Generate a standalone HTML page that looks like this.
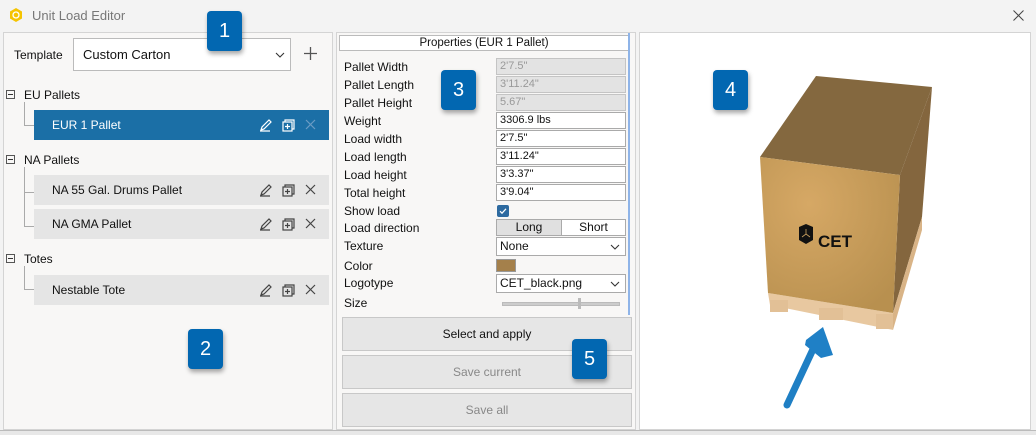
<!DOCTYPE html>
<html><head><style>
*{box-sizing:border-box;margin:0;padding:0}
body{width:1036px;height:435px;background:#f3f3f3;font-family:"Liberation Sans",sans-serif;font-size:12px;color:#111;position:relative;overflow:hidden}
.a{position:absolute}
.badge{position:absolute;width:35px;height:40px;background:#0267b1;border-radius:4px;color:#fff;font-size:20px;text-align:center;line-height:40px;box-shadow:1px 3px 5px rgba(0,0,0,.35)}
.lbl{position:absolute;left:344px;font-size:12px}
.inp{position:absolute;left:496px;width:130px;height:17px;border:1px solid #aaa;background:#fff;font-size:11px;padding-left:3px;line-height:15px}
.dis{background:#e3e3e3;color:#999;border-color:#c4c4c4}
.item{position:absolute;left:34px;width:295px;height:30px;background:#e5e5e5;line-height:30px;padding-left:18px;font-size:12px}
.grp{position:absolute;left:24px;font-size:12px}
.minus{position:absolute;left:6px;width:9px;height:9px;border:1px solid #555}
.minus:after{content:"";position:absolute;left:1px;top:3px;width:5px;height:1px;background:#333}
.ic{position:absolute;right:12px;top:7px;width:60px;height:16px}
.btn{position:absolute;left:342px;width:290px;height:34px;border:1px solid #c8c8c8;background:#e6e6e6;text-align:center;line-height:32px;font-size:12px}
.chev{position:absolute;right:5px;top:50%;margin-top:-3px}
</style></head><body>
<svg class="a" style="left:8px;top:7px" width="16" height="16"><polygon points="8,1 14,4.5 14,11.5 8,15 2,11.5 2,4.5" fill="#f5c400"/><circle cx="8" cy="8" r="3" fill="none" stroke="#fff" stroke-width="1.3"/></svg>
<div class="a" style="left:32px;top:8px;color:#777;font-size:13px">Unit Load Editor</div>
<svg class="a" style="left:1013px;top:10px" width="11" height="11"><path d="M0.5 0.5l10 10M10.5 0.5l-10 10" stroke="#444" stroke-width="1"/></svg>
<!-- left panel -->
<div class="a" style="left:3px;top:32px;width:330px;height:398px;background:#f8f7f6;border:1px solid #d4d4d4"></div>
<div class="a" style="left:14px;top:48px">Template</div>
<div class="a" style="left:73px;top:38px;width:218px;height:33px;border:1px solid #bbb;background:#fff;padding-left:9px;line-height:31px;font-size:13px">Custom Carton<svg class="chev" width="10" height="6"><path d="M1 1l4 4 4-4" fill="none" stroke="#333" stroke-width="1.1"/></svg></div>
<svg class="a" style="left:304px;top:47px" width="13" height="13"><path d="M6.5 0v13M0 6.5h13" stroke="#555" stroke-width="1.3"/></svg>
<div class="minus" style="top:90px"></div><div class="grp" style="top:88px">EU Pallets</div>
<div class="a" style="left:24px;top:102px;width:10px;height:24px;border-left:1px solid #aaa;border-bottom:1px solid #aaa"></div>
<div class="item" style="top:110px;background:#1b6fa6;color:#fff">EUR 1 Pallet
<svg class="ic" viewBox="0 0 60 16"><g fill="none" stroke="#fff" stroke-width="1.2"><path d="M4 13l1-3 7-7 2 2-7 7zM3 14h10"/><rect x="26" y="5" width="9" height="9"/><path d="M28 5V3h9v9h-2M30.5 7v5M28 9.5h5"/></g><path d="M49 3l9 9M58 3l-9 9" stroke="#6b9cc4" stroke-width="1.2"/></svg></div>
<div class="minus" style="top:155px"></div><div class="grp" style="top:153px">NA Pallets</div>
<div class="a" style="left:24px;top:167px;width:10px;height:60px;border-left:1px solid #aaa;border-bottom:1px solid #aaa"></div>
<div class="a" style="left:24px;top:192px;width:10px;height:1px;background:#aaa"></div>
<div class="item" style="top:175px">NA 55 Gal. Drums Pallet
<svg class="ic" viewBox="0 0 60 16"><g fill="none" stroke="#444" stroke-width="1.2"><path d="M4 13l1-3 7-7 2 2-7 7zM3 14h10"/><rect x="26" y="5" width="9" height="9"/><path d="M28 5V3h9v9h-2M30.5 7v5M28 9.5h5"/><path d="M49 3l9 9M58 3l-9 9"/></g></svg></div>
<div class="item" style="top:209px">NA GMA Pallet
<svg class="ic" viewBox="0 0 60 16"><g fill="none" stroke="#444" stroke-width="1.2"><path d="M4 13l1-3 7-7 2 2-7 7zM3 14h10"/><rect x="26" y="5" width="9" height="9"/><path d="M28 5V3h9v9h-2M30.5 7v5M28 9.5h5"/><path d="M49 3l9 9M58 3l-9 9"/></g></svg></div>
<div class="minus" style="top:254px"></div><div class="grp" style="top:252px">Totes</div>
<div class="a" style="left:24px;top:266px;width:10px;height:24px;border-left:1px solid #aaa;border-bottom:1px solid #aaa"></div>
<div class="item" style="top:275px">Nestable Tote
<svg class="ic" viewBox="0 0 60 16"><g fill="none" stroke="#444" stroke-width="1.2"><path d="M4 13l1-3 7-7 2 2-7 7zM3 14h10"/><rect x="26" y="5" width="9" height="9"/><path d="M28 5V3h9v9h-2M30.5 7v5M28 9.5h5"/><path d="M49 3l9 9M58 3l-9 9"/></g></svg></div>
<!-- middle -->
<div class="a" style="left:336px;top:32px;width:300px;height:398px;background:#f8f7f6;border:1px solid #d4d4d4"></div>
<div class="a" style="left:339px;top:35px;width:290px;height:16px;border:1px solid #bbb;background:#fff;text-align:center;font-size:11.5px;line-height:14px">Properties (EUR 1 Pallet)</div>
<div class="a" style="left:628px;top:33px;width:2px;height:282px;background:#8fb4e8"></div>
<div class="lbl" style="top:60px">Pallet Width</div><div class="inp dis" style="top:58px">2'7.5"</div>
<div class="lbl" style="top:78px">Pallet Length</div><div class="inp dis" style="top:76px">3'11.24"</div>
<div class="lbl" style="top:96px">Pallet Height</div><div class="inp dis" style="top:94px">5.67"</div>
<div class="lbl" style="top:114px">Weight</div><div class="inp" style="top:112px">3306.9 lbs</div>
<div class="lbl" style="top:132px">Load width</div><div class="inp" style="top:130px">2'7.5"</div>
<div class="lbl" style="top:150px">Load length</div><div class="inp" style="top:148px">3'11.24"</div>
<div class="lbl" style="top:168px">Load height</div><div class="inp" style="top:166px">3'3.37"</div>
<div class="lbl" style="top:186px">Total height</div><div class="inp" style="top:184px">3'9.04"</div>
<div class="lbl" style="top:204px">Show load</div>
<div class="a" style="left:497px;top:205px;width:12px;height:12px;background:#2d6aa0;border-radius:2px"><svg width="12" height="12" style="position:absolute;left:0;top:0"><path d="M3 6.2l2 2 4-4.4" fill="none" stroke="#fff" stroke-width="1.2"/></svg></div>
<div class="lbl" style="top:221px">Load direction</div>
<div class="a" style="left:496px;top:219px;width:130px;height:17px;border:1px solid #aaa;display:flex;font-size:12px;line-height:15px"><div style="width:64px;background:#e0e0e0;text-align:center">Long</div><div style="flex:1;background:#fff;text-align:center;border-left:1px solid #aaa">Short</div></div>
<div class="lbl" style="top:239px">Texture</div><div class="inp" style="top:237px;height:19px;line-height:17px;font-size:12px">None<svg class="chev" width="10" height="6"><path d="M1 1l4 4 4-4" fill="none" stroke="#333" stroke-width="1.1"/></svg></div>
<div class="lbl" style="top:259px">Color</div><div class="a" style="left:496px;top:259px;width:20px;height:13px;background:#a4804b;border:1px solid #999"></div>
<div class="lbl" style="top:276px">Logotype</div><div class="inp" style="top:274px;height:19px;line-height:17px;font-size:12px">CET_black.png<svg class="chev" width="10" height="6"><path d="M1 1l4 4 4-4" fill="none" stroke="#333" stroke-width="1.1"/></svg></div>
<div class="lbl" style="top:296px">Size</div>
<div class="a" style="left:502px;top:302px;width:118px;height:4px;background:#ccc;border:1px solid #bbb"></div>
<div class="a" style="left:578px;top:298px;width:3px;height:11px;background:#bbb"></div>
<div class="btn" style="top:317px">Select and apply</div>
<div class="btn" style="top:355px;color:#888">Save current</div>
<div class="btn" style="top:393px;color:#888">Save all</div>
<!-- right -->
<div class="a" style="left:639px;top:32px;width:392px;height:398px;background:#fff;border:1px solid #d4d4d4"></div>
<svg class="a" style="left:639px;top:32px" width="392" height="398" viewBox="639 32 392 398">
<defs><radialGradient id="g" cx="0.35" cy="0.3" r="0.8"><stop offset="0" stop-color="#d6a865"/><stop offset="1" stop-color="#b8904f"/></radialGradient></defs>
<polygon points="768,293 893,313 893,330 770,305" fill="#e8c8a0"/>
<rect x="770" y="300" width="18" height="12" fill="#e2c096"/><rect x="819" y="308" width="24" height="12" fill="#e2c096"/><rect x="876" y="314" width="17" height="15" fill="#e2c096"/>
<polygon points="932,87 922,217 893,313 900,175" fill="#84663e"/>
<polygon points="922,217 922,230 893,330 893,313" fill="#d9b487"/>
<polygon points="816,76 932,87 900,175 760,157" fill="#84683f"/>
<polygon points="760,157 900,175 893,313 768,293" fill="url(#g)"/>
<polygon points="806,224 813,227 813,240 806,244 799,240 799,227" fill="#111"/>
<path d="M806 229v5l-4 3M806 234l4 3" stroke="#c9a060" stroke-width="0.8" fill="none"/>
<text x="818" y="247" font-family="Liberation Sans" font-weight="bold" font-size="17" fill="#111">CET</text>
<line x1="787" y1="405" x2="815" y2="345" stroke="#1f7fc4" stroke-width="7" stroke-linecap="round"/>
<polygon points="823,327 833,355 821,358 805,345 806,340" fill="#1f80c6"/>
</svg>
<div class="a" style="left:0;top:430px;width:1036px;height:5px;background:#e8e8e8;border-top:1px solid #bbb"></div>
<div class="badge" style="left:207px;top:11px">1</div>
<div class="badge" style="left:188px;top:329px">2</div>
<div class="badge" style="left:441px;top:70px">3</div>
<div class="badge" style="left:713px;top:70px">4</div>
<div class="badge" style="left:572px;top:339px">5</div>
</body></html>
